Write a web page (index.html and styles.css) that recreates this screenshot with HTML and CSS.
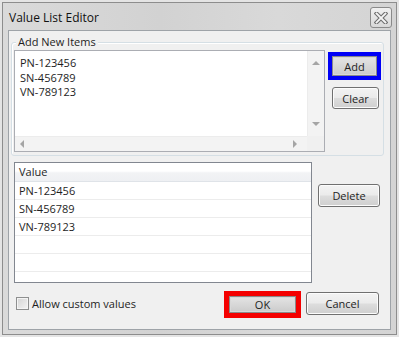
FILE: index.html
```html
<!DOCTYPE html>
<html>
<head>
<meta charset="utf-8">
<link rel="stylesheet" href="styles.css">
</head>
<body>
<div class="window">
  <div class="titlebar">
    <span class="title">Value List Editor</span>
    <div class="close">
      <svg width="14" height="12" viewBox="0 0 14 12">
        <path d="M2.5 1.5 L11.5 10.5 M11.5 1.5 L2.5 10.5" stroke="#6f6f6f" stroke-width="4" stroke-linecap="square" fill="none"/>
        <path d="M2.5 1.5 L11.5 10.5 M11.5 1.5 L2.5 10.5" stroke="#f4f4f4" stroke-width="1.8" stroke-linecap="square" fill="none"/>
      </svg>
    </div>
  </div>
  <div class="client">
    <div class="group">
      <span class="legend">Add New Items</span>
      <div class="editor">
        <div class="edit-main">
          <div class="edit-text">
            <div>PN-123456</div>
            <div>SN-456789</div>
            <div>VN-789123</div>
          </div>
          <div class="vscroll">
            <span class="arr up"></span>
            <span class="arr down"></span>
          </div>
        </div>
        <div class="hscroll-row">
          <div class="hscroll">
            <span class="arr left"></span>
            <span class="arr right"></span>
          </div>
          <div class="corner"></div>
        </div>
      </div>
      <div class="side">
        <div class="hl hl-blue"><div class="btn btn-hot">Add</div></div>
        <div class="btn clear">Clear</div>
      </div>
    </div>
    <div class="grid-row">
      <div class="grid">
        <div class="grid-head">Value</div>
        <div class="grid-cell">PN-123456</div>
        <div class="grid-cell">SN-456789</div>
        <div class="grid-cell">VN-789123</div>
        <div class="grid-cell"></div>
        <div class="grid-cell"></div>
      </div>
      <div class="btn delete">Delete</div>
    </div>
    <div class="footer">
      <div class="check"><span class="box"></span><span>Allow custom values</span></div>
      <div class="actions">
        <div class="hl hl-red"><div class="btn btn-hot">OK</div></div>
        <div class="btn cancel">Cancel</div>
      </div>
    </div>
  </div>
</div>
</body>
</html>
```
FILE: styles.css
```css
html, body {
  margin: 0;
  padding: 0;
  background: #e4e4e4;
}
body {
  font-family: "Open Sans", "Noto Sans", "DejaVu Sans", sans-serif;
  font-size: 11px;
  color: #1e1e1e;
}
.window {
  margin: 2px;
  width: 395px;
  height: 333px;
  box-sizing: border-box;
  border: 1px solid #8d8d8d;
  background: linear-gradient(90deg, #dadada 0%, #d2d2d2 40%, #d9d9d9 70%, #d4d4d4 100%);
  padding: 0 5px 4px 5px;
  display: flex;
  flex-direction: column;
}
.titlebar {
  height: 27px;
  flex: none;
  display: flex;
  justify-content: space-between;
  align-items: flex-start;
}
.title {
  margin-left: 1px;
  margin-top: 6px;
  font-size: 12px;
  color: #111;
}
.close {
  margin-top: 4px;
  margin-right: -1px;
  width: 22px;
  height: 21px;
  box-sizing: border-box;
  border: 1px solid #8a8a8a;
  border-radius: 3px;
  background: linear-gradient(#f0f0f0, #d8d8d8);
  display: flex;
  align-items: center;
  justify-content: center;
}
.client {
  flex: 1;
  border: 1px solid #9ea3a8;
  background: #f0f0f0;
  display: flex;
  flex-direction: column;
}
.group {
  position: relative;
  margin: 11px 6px 0 2px;
  height: 114px;
  box-sizing: border-box;
  border: 1px solid #d5dfe5;
  border-radius: 3px;
  box-shadow: inset 1px 1px 0 #fff;
  display: flex;
  padding: 7px 0 3px 2px;
}
.legend {
  position: absolute;
  top: -9px;
  left: 4px;
  padding: 0 2px;
  background: #f0f0f0;
  font-size: 11px;
  line-height: 16px;
}
.editor {
  width: 311px;
  height: 102px;
  box-sizing: border-box;
  border: 1px solid #abadb3;
  background: #fff;
  display: flex;
  flex-direction: column;
}
.edit-main {
  flex: 1;
  display: flex;
}
.edit-text {
  flex: 1;
  padding: 5px 0 0 5px;
  line-height: 14.5px;
}
.vscroll {
  width: 16px;
  background: #f3f3f3;
  border-left: 1px solid #ececec;
  display: flex;
  flex-direction: column;
  justify-content: space-between;
  align-items: center;
  padding: 10px 0 10px;
}
.hscroll-row {
  height: 15px;
  display: flex;
}
.hscroll {
  flex: 1;
  background: #f3f3f3;
  border-top: 1px solid #ececec;
  display: flex;
  justify-content: space-between;
  align-items: center;
  padding: 0 10px 0 5px;
}
.corner {
  width: 17px;
  background: #f0f0f0;
}
.arr {
  width: 0;
  height: 0;
  display: block;
}
.arr.up {
  border-left: 4px solid transparent;
  border-right: 4px solid transparent;
  border-bottom: 4px solid #a5a5a5;
}
.arr.down {
  border-left: 4px solid transparent;
  border-right: 4px solid transparent;
  border-top: 4px solid #a5a5a5;
}
.arr.left {
  border-top: 4px solid transparent;
  border-bottom: 4px solid transparent;
  border-right: 4px solid #a5a5a5;
}
.arr.right {
  border-top: 4px solid transparent;
  border-bottom: 4px solid transparent;
  border-left: 4px solid #a5a5a5;
}
.side {
  margin-left: 3px;
  margin-top: 2px;
  display: flex;
  flex-direction: column;
  align-items: flex-start;
}
.btn {
  box-sizing: border-box;
  border: 1px solid #707070;
  border-radius: 3px;
  background: linear-gradient(#f3f3f3 0%, #ebebeb 48%, #dddddd 52%, #cfcfcf 100%);
  box-shadow: inset 0 0 0 1px #fcfcfc;
  display: flex;
  align-items: center;
  justify-content: center;
  color: #1e1e1e;
  font-size: 11px;
}
.hl {
  box-sizing: border-box;
  display: flex;
}
.hl-blue {
  width: 53px;
  height: 28px;
  border: 4px solid #0000f6;
}
.hl-red {
  width: 77px;
  height: 27px;
  border: 5px solid #f40000;
}
.btn-hot {
  flex: 1;
  border-radius: 0;
  border-color: #8a8a8a;
  background: linear-gradient(#e4e4e4, #cbcbcb);
  box-shadow: inset 0 0 0 1px #d8d8d8;
}
.clear {
  margin-top: 7px;
  margin-left: 4px;
  width: 47px;
  height: 22px;
}
.grid-row {
  margin: 6px 0 0 5px;
  display: flex;
  align-items: flex-start;
}
.grid {
  width: 298px;
  height: 121px;
  box-sizing: border-box;
  border: 1px solid #828790;
  background: #fff;
}
.grid-head {
  height: 19px;
  box-sizing: border-box;
  padding-left: 4px;
  line-height: 18px;
  background: linear-gradient(#ffffff 0%, #ffffff 45%, #f2f3f5 55%, #eef0f3 100%);
  border-bottom: 1px solid #dfe3e8;
}
.grid-cell {
  height: 18px;
  box-sizing: border-box;
  padding-left: 4px;
  line-height: 17px;
  border-bottom: 1px solid #ececec;
}
.delete {
  margin-left: 6px;
  margin-top: 22px;
  width: 62px;
  height: 23px;
}
.footer {
  margin-top: 8px;
  display: flex;
  justify-content: space-between;
  align-items: flex-start;
}
.check {
  margin-left: 7px;
  margin-top: 5px;
  display: flex;
  align-items: center;
  gap: 3px;
}
.box {
  width: 13px;
  height: 13px;
  box-sizing: border-box;
  border: 1px solid #8e8f8f;
  background: linear-gradient(135deg, #d4d4d4, #f4f4f4);
  box-shadow: inset 0 0 0 1px #f4f4f4;
}
.actions {
  margin-right: 11px;
  display: flex;
  align-items: flex-start;
  gap: 5px;
}
.cancel {
  margin-top: 1px;
  width: 73px;
  height: 23px;
}
```
